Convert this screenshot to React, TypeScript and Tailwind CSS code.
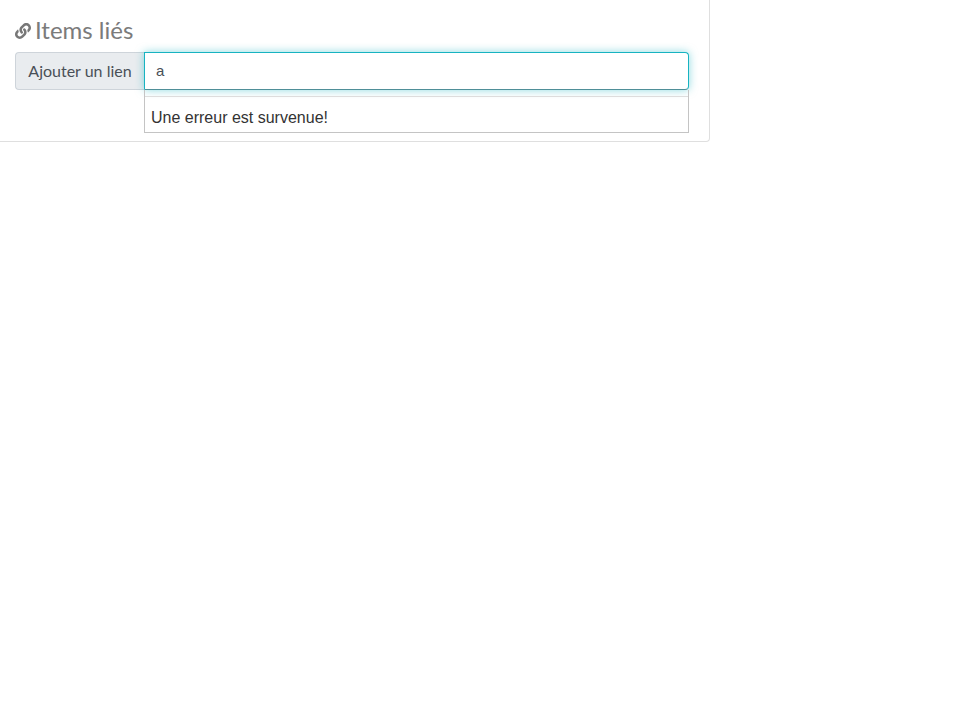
import React from "react";
import { FaLink } from "react-icons/fa";

export default function App() {
  return (
    <div className="min-h-[720px] bg-white font-['Lato',sans-serif]">
      <div className="w-[710px] h-[142px] border-r border-b border-[#dfdfdf] rounded-br-[4px] pl-[15px] pr-5 pt-[15px]">
        <div className="flex items-center h-[30px] text-[24px] leading-[30px] text-[#7b7b7b]">
          <FaLink className="w-[16px] h-[16px] mr-[4px] mt-[1px] text-[#777777]" />
          <span>Items liés</span>
        </div>
        <div className="flex mt-[7px] w-[674px] items-start">
          <div className="w-[129px] h-[38px] flex items-center justify-center bg-[#e9ecef] border border-r-0 border-[#ced4da] rounded-l-[4px] text-[16px] text-[#495057]">
            Ajouter un lien
          </div>
          <div className="w-[545px] flex flex-col">
            <div className="h-[38px] flex items-center pl-[11px] pt-[1px] bg-white border border-[#17b3c1] border-b-[#4f8f98] rounded-r-[4px] shadow-[0_0_8px_rgba(23,179,193,0.5)] font-['Liberation_Sans',sans-serif] text-[15px] text-[#495057]">
              a
            </div>
            <div className="h-[43px] border-x border-b border-[#c4c4c4] flex flex-col">
              <div className="h-[7px] border-b border-[#dddddd]" />
              <div className="flex-1 pl-[6px] pt-[11px] font-['Liberation_Sans',sans-serif] text-[16px] leading-[20px] text-[#333333]">
                Une erreur est survenue!
              </div>
            </div>
          </div>
        </div>
      </div>
    </div>
  );
}
